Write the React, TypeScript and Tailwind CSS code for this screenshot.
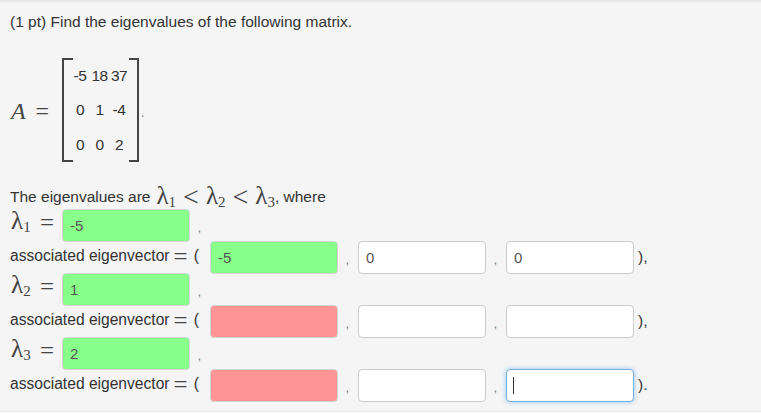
const sans = { fontFamily: '"Liberation Sans", Arial, sans-serif' }

const Lambda = ({ n }: { n: number }) => (
  <span className="font-['Liberation_Serif',serif] whitespace-nowrap text-[#444444]">
    <span className="text-[25px] leading-none">λ</span>
    <span className="text-[15px] leading-none relative top-[3px]">{n}</span>
  </span>
)

const Field = ({ value = '', tone = 'white', focused = false }: { value?: string; tone?: 'white' | 'green' | 'red'; focused?: boolean }) => {
  const bg = tone === 'green' ? 'bg-[#88ff88]' : tone === 'red' ? 'bg-[#ff9494]' : 'bg-white'
  const border = focused
    ? 'border-[#78aee0] shadow-[0_0_5px_rgba(82,168,236,0.6)]'
    : tone === 'white'
      ? 'border-[#cccccc]'
      : 'border-[#d4d4d4]'
  return (
    <div className="relative w-[128px] h-[33px] -mb-px shrink-0">
      <input
        readOnly
        value={value}
        className={`w-full h-full rounded-[4px] border px-[7px] text-[15px] text-[#555555] outline-none ${bg} ${border}`}
      />
      {focused && <span className="absolute left-[7px] top-[8px] w-px h-[17px] bg-[#333333]" />}
    </div>
  )
}

const Comma = () => <span className="w-[19px] mr-px shrink-0 text-center text-[#777777] text-[12px] pt-[5px]">,</span>

const ValueRow = ({ n, value }: { n: number; value: string }) => (
  <div className="flex items-center h-[32px]">
    <div className="w-[52px] flex items-center justify-between pr-[8px] pl-px relative -top-[3px]">
      <Lambda n={n} />
      <span className="font-['Liberation_Serif',serif] text-[25px] leading-none text-[#444444]">=</span>
    </div>
    <Field value={value} tone="green" />
    <Comma />
  </div>
)

const VectorRow = ({ vals, tones, end, focused }: { vals: string[]; tones: ('white' | 'green' | 'red')[]; end: string; focused?: boolean }) => (
  <div className="flex items-center h-[32px]">
    <span className="w-[200px] shrink-0 flex items-center text-[15.6px] whitespace-nowrap relative -top-[1px]">
      associated eigenvector
      <span className="ml-[4px] font-['Liberation_Serif',serif] text-[25px] leading-none text-[#444444]">=</span>
      <span className="ml-[6px]">(</span>
    </span>
    <Field value={vals[0]} tone={tones[0]} />
    <Comma />
    <Field value={vals[1]} tone={tones[1]} />
    <Comma />
    <Field value={vals[2]} tone={tones[2]} focused={focused} />
    <span className="ml-[4px] text-[15.5px]">{end}</span>
  </div>
)

const matrix = [
  ['-5', '18', '37'],
  ['0', '1', '-4'],
  ['0', '0', '2'],
]

export default function App() {
  return (
    <div className="w-[761px] h-[414px] bg-white overflow-hidden text-[#333333]" style={sans}>
      <div className="h-[412px] bg-[#f5f5f5] border-t-2 border-b border-[#e8e8e8] px-[10px] pt-[12px]">
        <p className="text-[15.5px] leading-[16px] whitespace-nowrap">(1 pt) Find the eigenvalues of the following matrix.</p>

        <div className="flex items-center mt-[28px] h-[104px]">
          <span className="font-['Liberation_Serif',serif] text-[24px] text-[#444444] w-[52px] flex justify-between pr-[13px] pl-[1px] pt-[2px]">
            <i>A</i>
            <span>=</span>
          </span>
          <div className="relative w-[77px] h-[104px] flex flex-col justify-center border-l-2 border-r-2 border-[#444444] pr-[2px]">
            <span className="absolute left-0 top-0 w-[9px] h-[2px] bg-[#444444]" />
            <span className="absolute left-0 bottom-0 w-[9px] h-[2px] bg-[#444444]" />
            <span className="absolute right-0 top-0 w-[8px] h-[2px] bg-[#444444]" />
            <span className="absolute right-0 bottom-0 w-[8px] h-[2px] bg-[#444444]" />
            {matrix.map((row, i) => (
              <div key={i} className="h-[36px] grid grid-cols-[20px_19px_20px] items-center justify-center text-center text-[15.5px] tracking-[-0.5px]">
                {row.map((c, j) => (
                  <span key={j}>{c}</span>
                ))}
              </div>
            ))}
          </div>
          <span className="text-[12px] text-[#777777] ml-[2px] pt-[6px]">.</span>
        </div>

        <div className="flex items-center h-[25px] mt-[22px] text-[15.5px] whitespace-nowrap">
          <span>The eigenvalues are</span>
          <span className="ml-[6px] flex items-center">
            <Lambda n={1} />
            <span className="mx-[7px] font-['Liberation_Serif',serif] text-[28px] leading-none text-[#444444]">&lt;</span>
            <Lambda n={2} />
            <span className="mx-[7px] font-['Liberation_Serif',serif] text-[28px] leading-none text-[#444444]">&lt;</span>
            <Lambda n={3} />
          </span>
          <span>, where</span>
        </div>

        <ValueRow n={1} value="-5" />
        <VectorRow vals={['-5', '0', '0']} tones={['green', 'white', 'white']} end="),"/>
        <ValueRow n={2} value="1" />
        <VectorRow vals={['', '', '']} tones={['red', 'white', 'white']} end="),"/>
        <ValueRow n={3} value="2" />
        <VectorRow vals={['', '', '']} tones={['red', 'white', 'white']} end=")." focused />
      </div>
    </div>
  )
}
